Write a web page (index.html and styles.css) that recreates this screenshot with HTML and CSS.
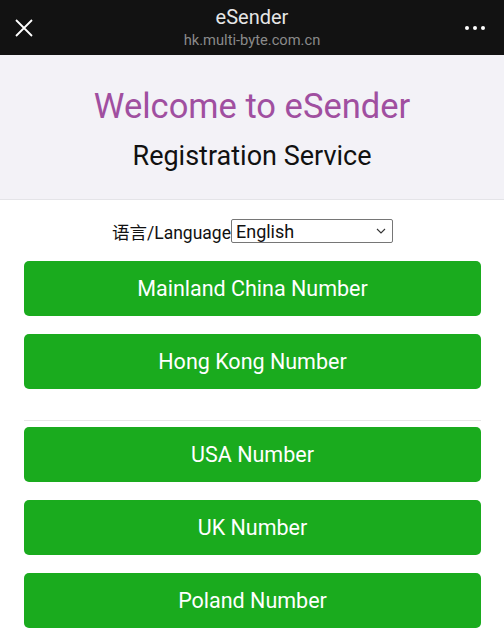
FILE: index.html
```html
<!DOCTYPE html>
<html>
<head>
<meta charset="utf-8">
<link rel="stylesheet" href="styles.css">
</head>
<body>
<div class="topbar">
  <div class="tb-left">
    <svg width="18" height="18" viewBox="0 0 18 18"><path d="M1 1L17 17M17 1L1 17" stroke="#fff" stroke-width="1.8" fill="none"/></svg>
  </div>
  <div class="tb-center">
    <div class="tb-title">eSender</div>
    <div class="tb-url">hk.multi-byte.com.cn</div>
  </div>
  <div class="tb-right">
    <span class="dot"></span><span class="dot"></span><span class="dot"></span>
  </div>
</div>
<div class="hero">
  <div class="welcome">Welcome to eSender</div>
  <div class="subtitle">Registration Service</div>
</div>
<div class="main">
  <div class="lang">
    <span class="lang-label">语言/Language</span>
    <div class="select">
      <span>English</span>
      <svg width="10" height="6" viewBox="0 0 10 6"><path d="M1 1L5 5L9 1" stroke="#333" stroke-width="1.1" fill="none"/></svg>
    </div>
  </div>
  <div class="btn">Mainland China Number</div>
  <div class="btn">Hong Kong Number</div>
  <div class="divider"></div>
  <div class="btn">USA Number</div>
  <div class="btn">UK Number</div>
  <div class="btn">Poland Number</div>
</div>
</body>
</html>
```
FILE: styles.css
```css
html, body { margin: 0; padding: 0; }
body {
  font-family: Roboto, "Noto Sans CJK SC", sans-serif;
  background: #fff;
  width: 504px;
  overflow: hidden;
}
.topbar {
  height: 55px;
  background: #121212;
  display: flex;
  align-items: center;
  justify-content: space-between;
}
.tb-left {
  width: 48px;
  display: flex;
  justify-content: center;
  padding-top: 1px;
}
.tb-center {
  display: flex;
  flex-direction: column;
  align-items: center;
}
.tb-title {
  color: #e6e6e6;
  font-size: 20px;
  line-height: 24px;
  margin-top: -2px;
}
.tb-url {
  color: #8a8a8a;
  font-size: 14.7px;
  line-height: 18px;
  margin-top: 2px;
}
.tb-right {
  width: 48px;
  display: flex;
  gap: 4px;
  justify-content: center;
  padding-right: 10px;
  box-sizing: border-box;
  padding-top: 1px;
}
.dot {
  width: 4px;
  height: 4px;
  border-radius: 50%;
  background: #fff;
}
.hero {
  background: #f3f2f7;
  border-bottom: 1px solid #e4e4e8;
  height: 145px;
  display: flex;
  flex-direction: column;
  align-items: center;
  box-sizing: border-box;
  padding-top: 31px;
}
.welcome {
  color: #a04fa0;
  font-size: 34.5px;
  line-height: 40px;
}
.subtitle {
  color: #111;
  font-size: 27px;
  line-height: 32px;
  margin-top: 14px;
}
.main {
  padding: 19px 23px 0 24px;
  display: flex;
  flex-direction: column;
}
.lang {
  display: flex;
  justify-content: center;
  align-items: center;
  height: 24px;
  margin-bottom: 18px;
}
.lang-label {
  font-size: 17.5px;
  color: #111;
}
.select {
  width: 162px;
  height: 24px;
  box-sizing: border-box;
  border: 1px solid #767676;
  border-radius: 2px;
  display: flex;
  align-items: center;
  justify-content: space-between;
  padding: 0 6px 0 4px;
  font-size: 18px;
  color: #111;
  background: #fff;
}
.btn {
  height: 55px;
  background: #1aab1e;
  border-radius: 5px;
  color: #fff;
  font-size: 21.5px;
  display: flex;
  align-items: center;
  justify-content: center;
  margin-bottom: 18px;
}
.divider {
  height: 1px;
  background: #e6e6e6;
  margin: 13px 0 6px;
}
```
